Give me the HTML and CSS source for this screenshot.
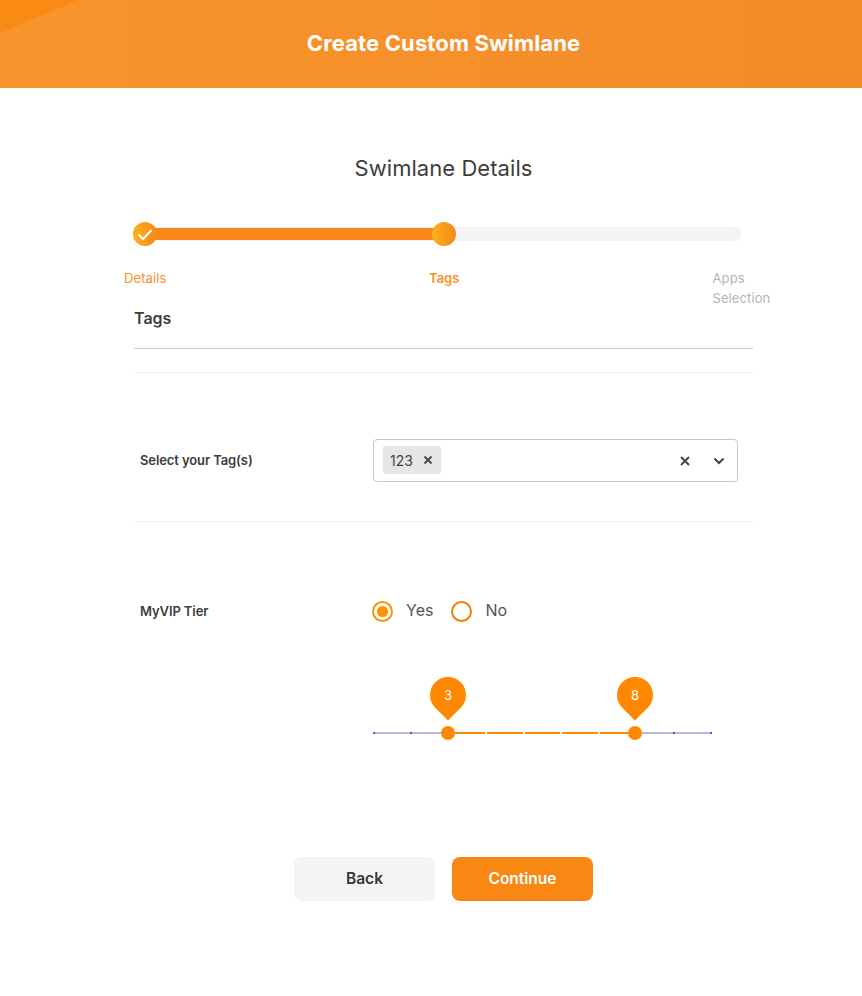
FILE: index.html
```html
<!DOCTYPE html>
<html lang="en">
<head>
<meta charset="utf-8">
<title>Create Custom Swimlane</title>
<link rel="stylesheet" href="styles.css">
</head>
<body>
<header class="banner">
  <svg class="banner-art" viewBox="0 0 862 88" preserveAspectRatio="none" aria-hidden="true">
    <polygon points="690,0 862,0 862,88 660,88" fill="#e98000" opacity="0.02"/>
    <polygon points="0,0 78,0 0,33" fill="#f98a14"/>
  </svg>
  <h1 class="banner-title">Create Custom Swimlane</h1>
</header>
<main class="page">
  <h2 class="page-title">Swimlane Details</h2>

  <div class="stepper">
    <div class="track">
      <div class="track-fill"></div>
      <span class="step-dot step-dot-done">
        <svg viewBox="0 0 24 24" width="24" height="24" aria-hidden="true"><path d="M5.5 12.5l4.5 4.5 8.5-9" fill="none" stroke="#fff" stroke-width="2.2"/></svg>
      </span>
      <span class="step-dot step-dot-current"></span>
    </div>
    <div class="step-labels">
      <span class="step-label">Details</span>
      <span class="step-label step-label-current">Tags</span>
      <span class="step-label step-label-todo">Apps Selection</span>
    </div>
  </div>

  <h3 class="section-title">Tags</h3>
  <hr class="rule-strong">
  <hr class="rule-soft rule-first">

  <div class="row row-select">
    <div class="row-label">Select your Tag(s)</div>
    <div class="select">
      <span class="chip">123
        <svg class="chip-x" viewBox="0 0 10 10" width="10" height="10" aria-hidden="true"><path d="M1.5 1.5l7 7M8.500 1.500l-7 7" stroke="#444" stroke-width="1.8" fill="none"/></svg>
      </span>
      <span class="select-spacer"></span>
      <svg class="select-clear" viewBox="0 0 10 10" width="10" height="10" aria-hidden="true"><path d="M1 1l8 8M9 1l-8 8" stroke="#444" stroke-width="2" fill="none"/></svg>
      <svg class="select-caret" viewBox="0 0 12 8" width="12" height="8" aria-hidden="true"><path d="M1.500 1.500l4.500 4.500 4.500-4.500" stroke="#444" stroke-width="2" fill="none"/></svg>
    </div>
  </div>
  <hr class="rule-soft">

  <div class="row row-radio">
    <div class="row-label">MyVIP Tier</div>
    <div class="radios">
      <span class="radio radio-on"></span><span class="radio-text">Yes</span>
      <span class="radio radio-off"></span><span class="radio-text">No</span>
    </div>
  </div>

  <div class="slider">
    <div class="slider-line">
      <div class="slider-range"></div>
      <i class="tick"></i><i class="tick"></i><i class="tick"></i><i class="tick"></i><i class="tick"></i>
      <i class="tick"></i><i class="tick"></i><i class="tick"></i><i class="tick"></i><i class="tick"></i>
      <div class="thumb thumb-low"><span class="pin"><span class="pin-value">3</span></span></div>
      <div class="thumb thumb-high"><span class="pin"><span class="pin-value">8</span></span></div>
    </div>
  </div>

  <div class="actions">
    <button class="btn btn-back" type="button">Back</button>
    <button class="btn btn-next" type="button">Continue</button>
  </div>
</main>
</body>
</html>
```

FILE: styles.css
```css
* { box-sizing: border-box; }
html, body { margin: 0; padding: 0; }
body {
  background: #fff;
  font-family: Inter, "Noto Sans", Roboto, sans-serif;
  color: #3c3c3c;
  height: 996px;
  overflow: hidden;
}
.banner {
  position: relative;
  height: 88px;
  background: linear-gradient(90deg, #f7942c 0%, #f68f29 60%, #f38c28 100%);
  display: flex;
  align-items: center;
  justify-content: center;
  padding: 0 0 2px 25px;
}
.banner-art { position: absolute; inset: 0; width: 100%; height: 100%; }
.banner-title {
  position: relative;
  margin: 0;
  color: #fff;
  font-size: 22px;
  line-height: 28px;
  font-weight: 700;
  letter-spacing: 0.13px;
}
.page { padding: 0 109px 0 134px; }
.page-title {
  margin: 66px 0 0;
  text-align: center;
  font-size: 22px;
  line-height: 28px;
  font-weight: 400;
  letter-spacing: 0.05px;
  color: #3d3d3d;
}
.stepper { margin-top: 45px; }
.track {
  position: relative;
  width: 608px;
  height: 14px;
  background: #f4f4f4;
  border-radius: 7px;
}
.track-fill {
  position: absolute;
  left: 0;
  top: 1px;
  width: 310px;
  height: 12px;
  background: #f88818;
}
.step-dot {
  position: absolute;
  top: -5px;
  width: 24px;
  height: 24px;
  border-radius: 50%;
  background: linear-gradient(90deg, #fdb21a, #f7861a);
  display: block;
}
.step-dot svg { display: block; }
.step-dot-done { left: -1px; }
.step-dot-current { left: 298px; }
.step-labels {
  display: grid;
  grid-template-columns: 305px 284px 60px;
  margin: 27px 0 0 -10px;
  font-size: 13px;
  line-height: 20px;
  letter-spacing: 0.1px;
}
.step-label { color: #f7931e; }
.step-label-current { font-weight: 600; letter-spacing: 0; }
.step-label-todo { color: #b5b5b5; margin-left: -0.5px; }
.section-title {
  margin: -1px 0 0;
  font-size: 16px;
  line-height: 22px;
  font-weight: 600;
  color: #3d3d3d;
}
.rule-strong, .rule-soft { margin: 0; border: 0; height: 1px; }
.rule-strong { margin-top: 19px; background: #cfcfcf; }
.rule-soft { background: #eeeeee; }
.rule-first { margin-top: 23px; }
.row { display: flex; align-items: center; }
.row-label {
  width: 239px;
  padding: 0 0 1px 6px;
  font-size: 13px;
  font-weight: 600;
  letter-spacing: -0.1px;
  color: #3d3d3d;
}
.row-select { margin-top: 66px; margin-bottom: 39px; }
.select {
  width: 365px;
  height: 43px;
  border: 1px solid #c6c6c6;
  border-radius: 4px;
  display: flex;
  align-items: center;
  padding: 0 12px 0 9px;
}
.chip {
  display: flex;
  align-items: center;
  height: 28px;
  width: 58px;
  margin-top: -1px;
  padding-left: 7px;
  background: #e6e6e6;
  border-radius: 2px;
  font-size: 14px;
  color: #444;
}
.chip-x { margin-left: 10px; }
.select-spacer { flex: 1; }
.select-clear { margin-right: 23px; }
.row-radio { margin-top: 77px; }
.radios { display: flex; align-items: center; margin-left: -1px; }
.radio {
  width: 21px;
  height: 21px;
  border-radius: 50%;
  display: block;
  position: relative;
}
.radio-on { border: 2px solid #ff9100; }
.radio-on::after {
  content: "";
  position: absolute;
  inset: 3px;
  border-radius: 50%;
  background: #ff9100;
}
.radio-off { border: 2px solid #f57c00; }
.radio-text {
  margin: 0 18px 2px 13px;
  font-size: 16px;
  line-height: 22px;
  color: #555;
}
.slider { margin: 109px 0 0 239px; width: 339px; }
.slider-line {
  position: relative;
  height: 2px;
  background: #b2bae3;
  display: flex;
  justify-content: space-between;
}
.slider-range {
  position: absolute;
  left: 75px;
  top: 0;
  width: 187px;
  height: 2px;
  background: #ff8800;
}
.tick {
  position: relative;
  display: block;
  width: 2px;
  height: 2px;
  background: #4a5ac0;
}
.tick:nth-of-type(n+3):nth-of-type(-n+8) { background: #fff; }
.thumb {
  position: absolute;
  top: -6px;
  width: 14px;
  height: 14px;
  margin-left: -7px;
  border-radius: 50%;
  background: #ff8800;
}
.thumb-low { left: 74.5px; }
.thumb-high { left: 262px; }
.pin {
  position: absolute;
  left: -11px;
  top: -49px;
  width: 36px;
  height: 36px;
  background: #ff8800;
  border-radius: 50% 50% 0 50%;
  transform: rotate(45deg);
  display: flex;
  align-items: center;
  justify-content: center;
}
.pin-value {
  transform: rotate(-45deg);
  color: #fff;
  font-size: 13px;
}
.actions {
  display: flex;
  justify-content: center;
  gap: 17px;
  margin-top: 123px;
}
.btn {
  width: 141px;
  height: 44px;
  border: 0;
  border-radius: 8px;
  font-family: inherit;
  font-size: 15.5px;
  font-weight: 600;
  padding: 0 0 2px;
}
.btn-back { background: #f4f4f4; color: #33343c; }
.btn-next { background: #f98713; color: #fff; }
```
